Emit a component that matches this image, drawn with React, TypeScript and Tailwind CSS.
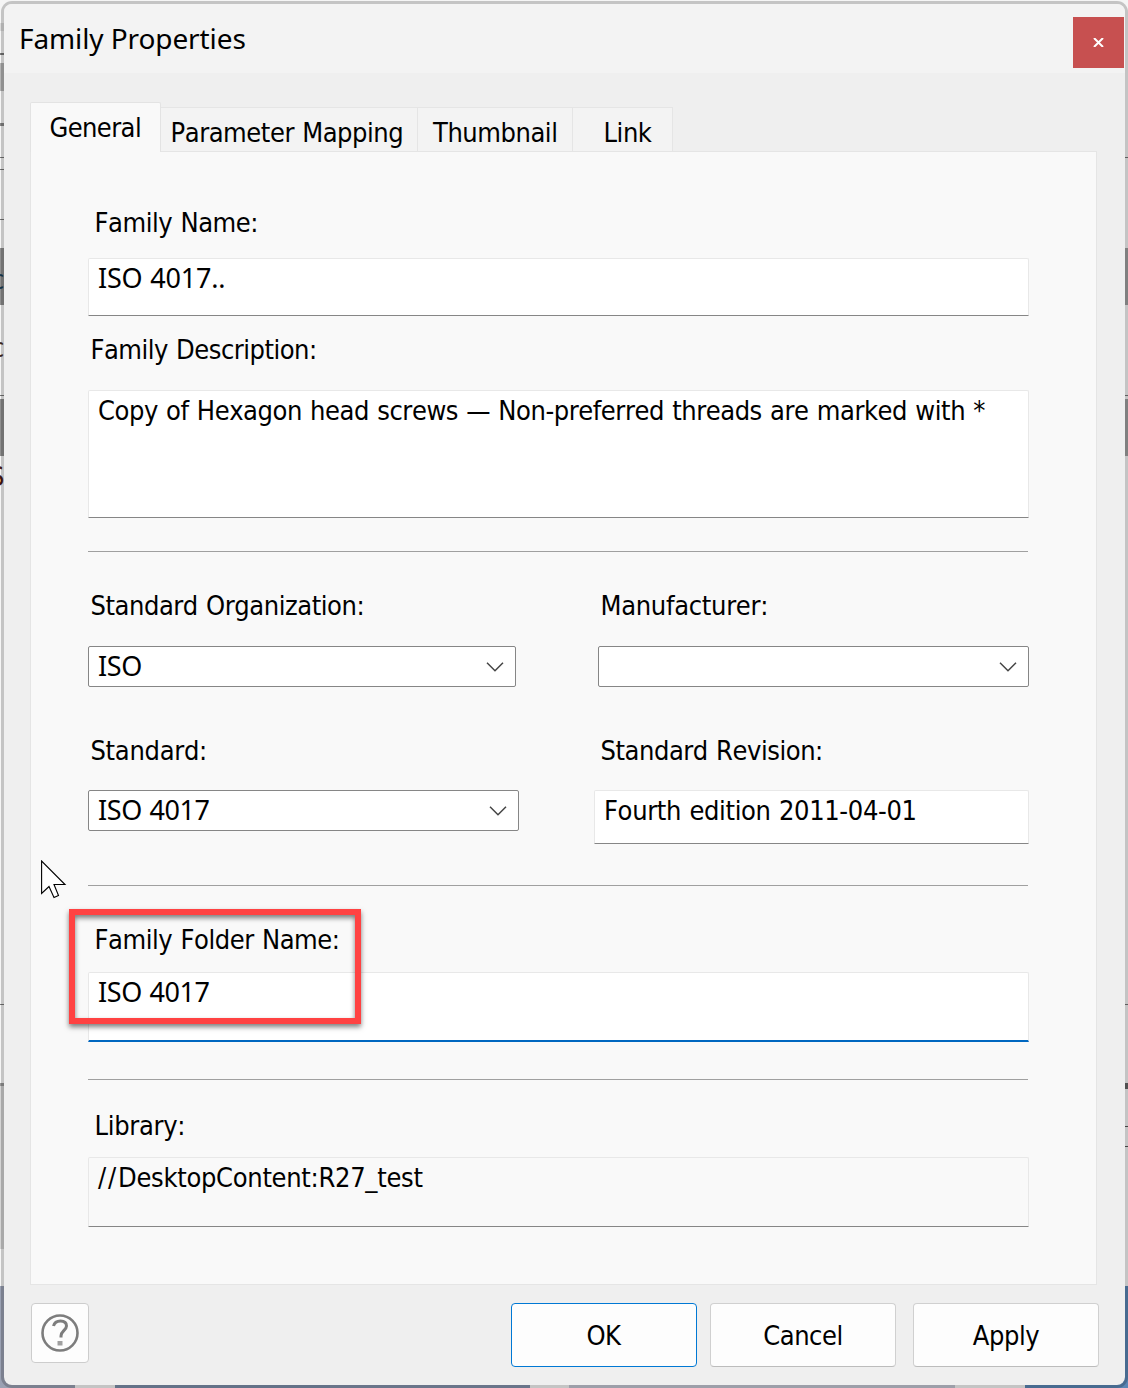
import React from "react";
import clsx from "clsx";

const tabs = [
  { label: "Parameter Mapping", className: "w-[257px] pl-[9.5px]" },
  { label: "Thumbnail", className: "w-[155px] pl-[15px]" },
  { label: "Link", className: "w-[100px] pl-[30.5px]" },
];

// bits of the application window that peek out around the dialog
const backdrop = [
  "left-0 top-[23px] h-[8px] w-1 bg-[#dcdcdc]",
  "left-0 top-[53px] h-[2px] w-1 bg-[#777777]",
  "left-0 top-[63px] h-[28px] w-1 bg-[#b5b5b5]",
  "left-0 top-[123px] h-[3px] w-1 bg-[#888888]",
  "left-0 top-[157px] h-px w-1 bg-[#777777]",
  "left-0 top-[169px] h-px w-1 bg-[#777777]",
  "left-0 top-[219px] h-px w-1 bg-[#777777]",
  "left-0 top-[248px] h-[57px] w-1 bg-[#8f8f8f]",
  "left-0 top-[395px] h-px w-1 bg-[#777777]",
  "left-0 top-[399px] h-[57px] w-1 bg-[#8f8f8f]",
  "left-0 top-[1004px] h-px w-1 bg-[#777777]",
  "left-0 top-[1083px] h-[3px] w-1 bg-[#999999]",
  "left-0 top-[1086px] h-[163px] w-1 bg-[#d4d4d4]",
  "left-0 top-[1286px] h-[102px] w-[75px] bg-[#9aa1b3]",
  "right-0 top-[157px] h-px w-[3px] bg-[#777777]",
  "right-0 top-[248px] h-[57px] w-[3px] bg-[#a0a0a0]",
  "right-0 top-[395px] h-px w-[3px] bg-[#777777]",
  "right-0 top-[399px] h-[57px] w-[3px] bg-[#a0a0a0]",
  "right-0 top-[1004px] h-px w-[3px] bg-[#777777]",
  "right-0 top-[1083px] h-[6px] w-[3px] bg-[#666666]",
  "right-0 top-[1126px] h-px w-[3px] bg-[#555555]",
  "right-0 top-[1146px] h-px w-[3px] bg-[#555555]",
  "right-0 top-[1286px] h-[102px] w-[103px] bg-[#5a86b5]",
  "bottom-0 left-[115px] h-[4px] w-[215px] bg-[#7d8fab]",
  "bottom-0 left-[330px] h-[4px] w-[200px] bg-[#8593ad]",
  "bottom-0 left-[569px] h-[4px] w-[386px] bg-[#c5c7d4]",
];

const Label: React.FC<{ className?: string; children: string }> = ({ className, children }) => (
  <div className={clsx("h-8 leading-9 whitespace-nowrap", className)}>{children}</div>
);

const Field: React.FC<{ className?: string; children: React.ReactNode }> = ({ className, children }) => (
  <div
    className={clsx(
      "rounded-t-[2px] border border-[#e8e8e8] pl-[9px] leading-8 whitespace-nowrap",
      className
    )}
  >
    {children}
  </div>
);

const Combo: React.FC<{ className?: string; value?: string }> = ({ className, value }) => (
  <div
    className={clsx(
      "flex h-[41px] items-start justify-between rounded-[2px] border border-[#868686] bg-white pl-[9px] pr-[11.5px] pt-[3px] font-['Noto_Sans'] leading-8 tracking-[-0.4px]",
      className
    )}
  >
    <span>{value}</span>
    <svg width="18" height="10" viewBox="0 0 18 10" className="mt-[11.5px]" fill="none" stroke="#444" strokeWidth="1.5">
      <path d="M1 .8 9 8.8 17 .8" />
    </svg>
  </div>
);

const Rule: React.FC<{ className?: string }> = ({ className }) => (
  <div className={clsx("h-px w-[940px] bg-[#a0a0a0]", className)} />
);

const Button: React.FC<{ primary?: boolean; className?: string; children: string }> = ({
  primary,
  className,
  children,
}) => (
  <button
    className={clsx(
      "h-16 w-[186px] rounded-[4px] border bg-[#fdfdfd] pt-[2px] leading-8",
      primary ? "border-[#0078d4] pr-px" : "border-[#d0d0d0] border-b-[#bcbcbc]",
      className
    )}
  >
    {children}
  </button>
);

const App: React.FC = () => {
  return (
    <div className="relative h-[1388px] w-[1128px] overflow-hidden bg-[#f5f5f5] pl-px pt-px font-['DejaVu_Sans_Condensed','DejaVu_Sans',sans-serif] text-[27px] tracking-[-0.45px] text-black [font-kerning:none] [word-spacing:1px] font-stretch-semi-condensed">
      {backdrop.map((piece) => (
        <div key={piece} className={clsx("absolute", piece)} />
      ))}
      <span className="absolute -left-[9px] top-[264px] leading-8 text-[#1b3a50]">c</span>
      <span className="absolute -left-[9px] top-[332px] leading-8 text-[#4a2a1a]">c</span>
      <span className="absolute -left-[11px] top-[461px] leading-8 text-[#4a1a10]">S</span>

      <div className="relative h-[1387px] w-[1127px] rounded-[11px] border-[3px] border-black/20 bg-[#efefef] bg-clip-padding">
        <header className="flex h-[69px] justify-between rounded-t-[8px] bg-[#f3f3f3]">
          <h1 className="pl-[15px] pt-[18px] font-['Noto_Sans'] text-[28px] leading-8 tracking-[-0.1px] [font-kerning:auto] [word-spacing:0px] font-stretch-normal">
            Family Properties
          </h1>
          <button className="mr-px mt-[13px] flex size-[51px] items-center justify-center bg-[#c75050]">
            <svg width="11" height="9" viewBox="0 0 11 9" stroke="white" strokeWidth="2">
              <path d="M1 0 10 9M10 0 1 9" />
            </svg>
          </button>
        </header>

        <nav className="flex h-[78px] items-end pl-[26px]">
          <div className="relative z-10 -mb-px h-[50px] w-[131px] rounded-t-[2px] border border-b-0 border-[#e3e3e3] bg-[#f9f9f9] pl-[18.5px] pt-[9px] leading-8 tracking-[-0.6px]">
            General
          </div>
          {tabs.map((tab) => (
            <div
              key={tab.label}
              className={clsx(
                "h-[44px] border-r border-t border-[#e5e5e5] bg-[#f3f3f3] pt-[9px] leading-8 whitespace-nowrap",
                tab.className
              )}
            >
              {tab.label}
            </div>
          ))}
        </nav>

        <main className="ml-[26px] h-[1134px] w-[1067px] border border-[#e5e5e5] bg-[#f9f9f9] pl-[57px] pt-[53px]">
          <Label className="pl-[6.5px]">Family Name:</Label>
          <Field className="mt-[21px] h-[58px] w-[941px] border-b-[#868686] bg-white pt-[3px] font-['Noto_Sans'] tracking-[-0.2px]">
            ISO 4017..
          </Field>
          <Label className="mt-4 pl-[2.5px] tracking-[-0.5px]">Family Description:</Label>
          <Field className="mt-[26px] h-[128px] w-[941px] border-b-[#868686] bg-white pt-1">
            Copy of Hexagon head screws — Non-preferred threads are marked with *
          </Field>
          <Rule className="mt-[33px]" />

          <div className="mt-9 flex">
            <div className="w-[506px]">
              <Label className="pl-[2.5px]">Standard Organization:</Label>
              <Combo className="mt-[26px] w-[428px]" value="ISO" />
              <Label className="mt-[46px] pl-[2.5px] tracking-[-0.3px]">Standard:</Label>
              <Combo className="mt-[25px] w-[431px]" value="ISO 4017" />
            </div>
            <div className="w-[435px]">
              <Label className="pl-[6.5px] tracking-[-0.3px]">Manufacturer:</Label>
              <Combo className="ml-1 mt-[26px] w-[431px]" />
              <Label className="mt-[46px] pl-[6.5px]">Standard Revision:</Label>
              <Field className="mt-[25px] h-[54px] border-b-[#868686] bg-white pt-1 tracking-[-0.35px]">
                Fourth edition 2011-04-01
              </Field>
            </div>
          </div>
          <Rule className="mt-[41px]" />

          <Label className="mt-9 pl-[6.5px]">Family Folder Name:</Label>
          <Field className="mt-[18px] h-[70px] w-[941px] border-b-2 border-b-[#0067c0] bg-white pt-[3px] font-['Noto_Sans'] tracking-[-0.4px]">
            ISO 4017
          </Field>
          <Rule className="mt-[37px]" />

          <Label className="mt-7 pl-[6.5px] tracking-[-0.3px]">Library:</Label>
          <Field className="mt-[17px] h-[70px] w-[941px] border-b-[#868686] pt-1 tracking-[-0.3px]">
            <span className="tracking-[1.8px]">//</span>DesktopContent:R27_test
          </Field>
        </main>

        <footer className="flex pl-[27px] pt-[18px]">
          <button className="flex h-[60px] w-[58px] items-center justify-center rounded-[4px] border border-[#cdcdcd] bg-[#fdfdfd]">
            <svg width="40" height="40" viewBox="0 0 40 40" fill="none" stroke="#7d7d7d" strokeWidth="2.6">
              <circle cx="20" cy="20" r="17.5" />
              <path d="M13.5 13c1-4 4-5 7-5 4 0 6 2 6 5 0 4-5.5 5-5.5 10v1.500" strokeWidth="3" />
              <path d="M17.500 28h5v4.500h-5z" fill="#a0a0a0" stroke="none" />
            </svg>
          </button>
          <Button primary className="ml-[422px]">OK</Button>
          <Button className="ml-[13px]">Cancel</Button>
          <Button className="ml-[17px]">Apply</Button>
        </footer>
      </div>

      {/* highlight around the folder name */}
      <div className="absolute left-[69px] top-[909px] h-[115px] w-[292px] border-[6px] border-[#ff4242] shadow-[0_3px_5px_rgba(0,0,0,0.5),inset_0_3px_5px_rgba(0,0,0,0.5)]" />

      <svg className="absolute left-[41px] top-[860px]" width="26" height="39" viewBox="0 0 26 39" fill="white" stroke="black" strokeWidth="1.1">
        <path d="M.6 1v32.500L8 26.500l5 11 4.500-2-4.500-11h11z" />
      </svg>
    </div>
  );
};

export default App;
